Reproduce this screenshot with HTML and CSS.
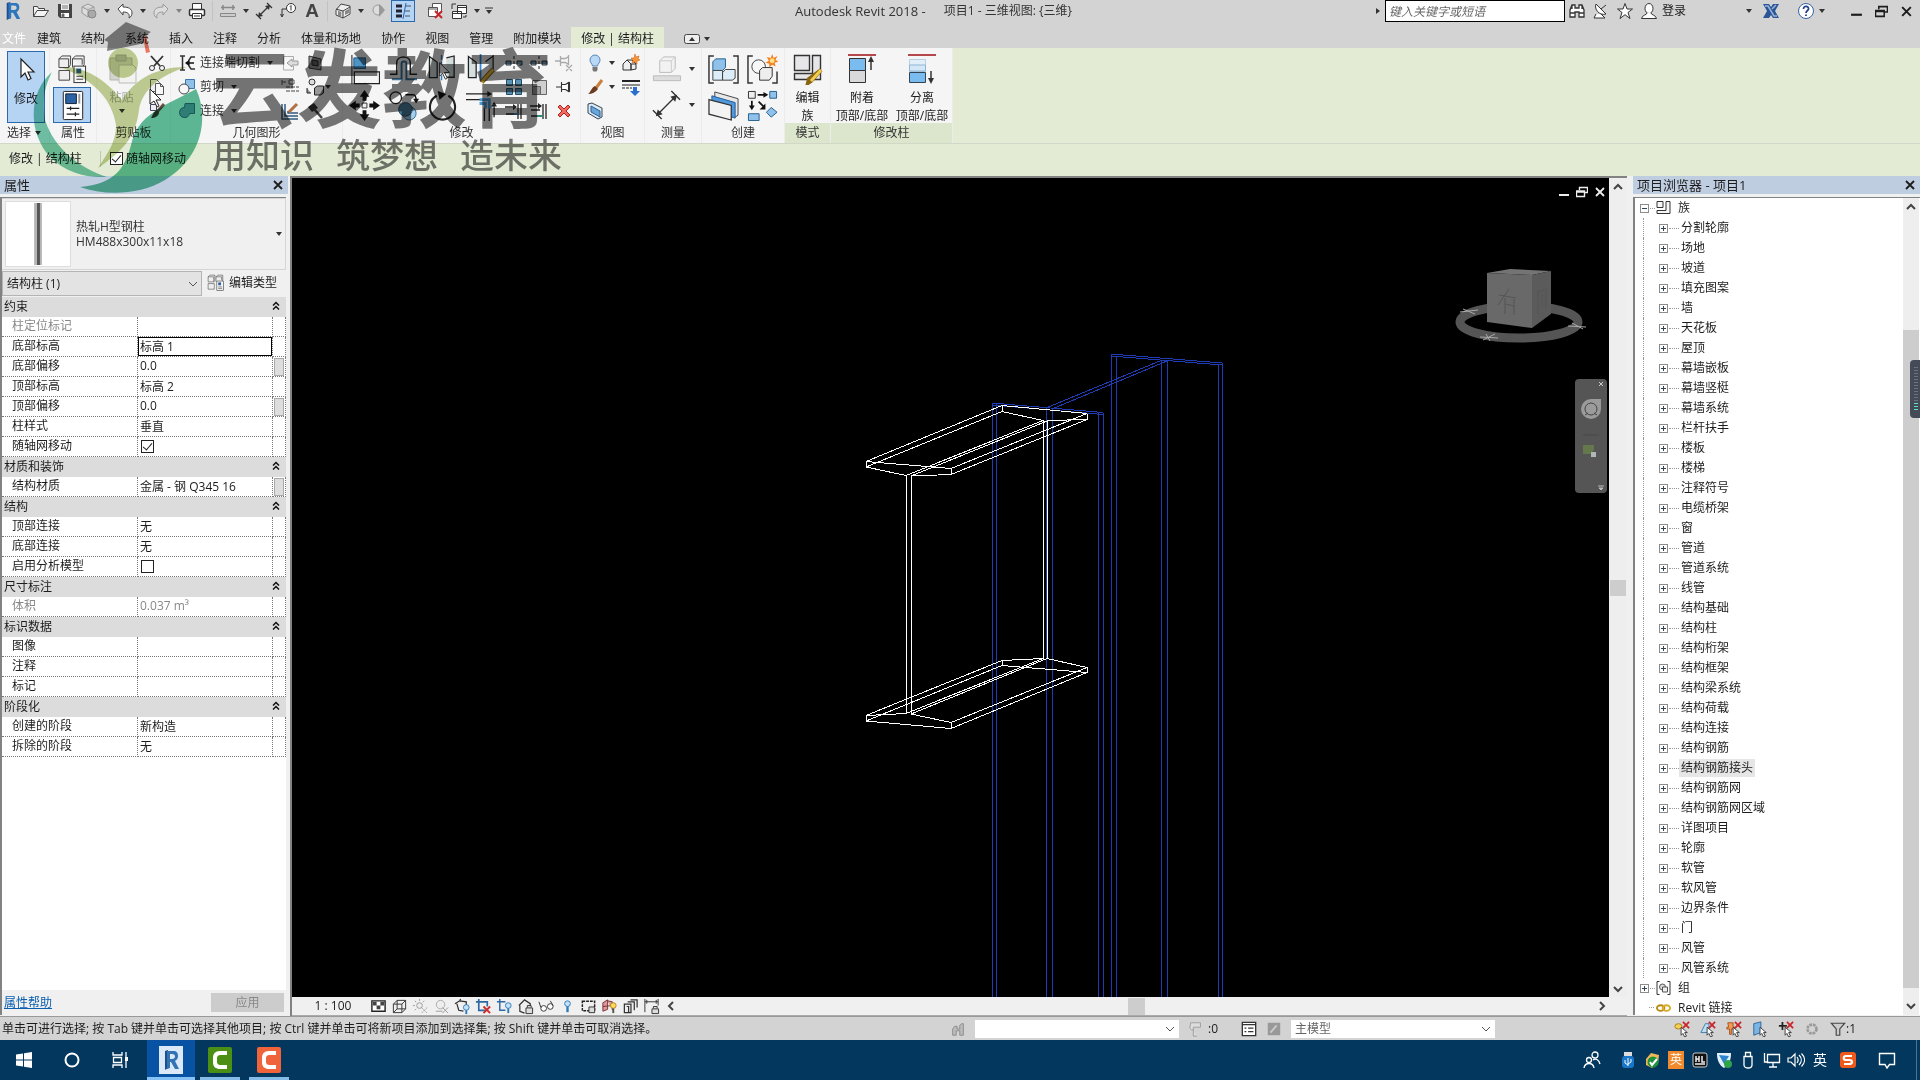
FILE: index.html
```html
<!DOCTYPE html>
<html lang="zh-CN">
<head>
    <meta charset="UTF-8">
    <meta name="viewport" content="width=device-width, initial-scale=1.0">
    <title>Autodesk Revit 2018</title>
    <link rel="stylesheet" href="styles.css">
</head>
<body>
    <svg class="sprite" aria-hidden="true">
        <!-- general -->
        <symbol id="caret" viewBox="0 0 8 8"><path d="M1 2h6L4 6z" fill="#333"/></symbol>
        <symbol id="chev-down" viewBox="0 0 10 10"><path d="M1 3l4 4 4-4" fill="none" stroke="#555"/></symbol>
        <symbol id="chev-bold" viewBox="0 0 10 10"><path d="M1 3l4 4 4-4" fill="none" stroke="#444" stroke-width="2"/></symbol>
        <symbol id="fold" viewBox="0 0 8 10"><path d="M1 4.500l3-3 3 3M1 8.500l3-3 3 3" fill="none" stroke="#111" stroke-width="1.500"/></symbol>
        <symbol id="close" viewBox="0 0 12 12"><path d="M2 2l8 8M10 2l-8 8" stroke="currentColor" stroke-width="1.800"/></symbol>
        <symbol id="minimize" viewBox="0 0 12 12"><path d="M1 9h10" stroke="currentColor" stroke-width="2"/></symbol>
        <symbol id="restore" viewBox="0 0 12 12"><path d="M3.500 4V1.500h8v5H9M.5 5h8v5.500h-8zM.5 6h8" fill="none" stroke="currentColor" stroke-width="1.400"/></symbol>
        <symbol id="redx" viewBox="0 0 18 18"><path d="M3 5l2-2 4 4 4-4 2 2-4 4 4 4-2 2-4-4-4 4-2-2 4-4z" fill="#f0685f" stroke="#b3221c"/></symbol>

        <!-- quick access -->
        <symbol id="logo" viewBox="0 0 18 20"><path d="M2 1l4-1v18l-4 2z" fill="#1f4f8b"/><path d="M4 1h7c4 0 5 2 5 5 0 2-1 4-3 5l4 8h-4l-4-7H7v6l-3 1zM7 4v5h3c2 0 3-1 3-2.500S12 4 10 4z" fill="#2f77bd" fill-rule="evenodd"/></symbol>
        <symbol id="open" viewBox="0 0 18 18"><path d="M1.500 14.500v-10h4l1 2h6v2M1.500 14.500l3.500-6h11.500l-4 6z" fill="#f3f3f3" stroke="#444"/></symbol>
        <symbol id="save" viewBox="0 0 18 18"><path d="M2 2h14v14H4l-2-2z" fill="#444"/><path d="M5 2h8v6H5z" fill="#eee"/><path d="M5 11h8v4H5z" fill="#fff"/><path d="M6 12h2v3H6zM6 4h6M6 6h6" fill="#444" stroke="#777"/></symbol>
        <symbol id="sync" viewBox="0 0 18 18"><path d="M2 5l6-3 6 3v6l-6 4-6-4zM2 5l6 3 6-3M8 8v7" fill="#ddd" stroke="#999"/><circle cx="12" cy="12" r="4" fill="#aaa" stroke="#888"/></symbol>
        <symbol id="undo" viewBox="0 0 18 18"><path d="M2 7l5-5v3c6 0 9 2 9 6 0 2-1 4-3 5 1-4-1-6-6-6v3z" fill="#fff" stroke="#444"/></symbol>
        <symbol id="redo" viewBox="0 0 18 18"><path d="M16 7l-5-5v3C5 5 2 7 2 11c0 2 1 4 3 5-1-4 1-6 6-6v3z" fill="#ddd" stroke="#999"/></symbol>
        <symbol id="print" viewBox="0 0 18 18"><path d="M4.500 7V1.500h9V7" fill="#fff" stroke="#333"/><rect x="1.500" y="7.500" width="15" height="6" rx="1" fill="#fff" stroke="#333" stroke-width="1.500"/><path d="M4.500 11.500h9v5h-9zM6 14h6" fill="#fff" stroke="#333"/></symbol>
        <symbol id="dim" viewBox="0 0 18 18"><path d="M2 5.500h14M4 3v5M14 3v5" stroke="#888" stroke-width="1.500"/><path d="M1.500 11.500h15v3h-15z" fill="#ccc" stroke="#888"/></symbol>
        <symbol id="measure" viewBox="0 0 18 18"><path d="M4 14L14 4M1 12l5 5M12 1l5 5" stroke="#333" stroke-width="1.300"/><path d="M3 15l1-5 4 4zM15 3l-5 1 4 4z" fill="#333"/></symbol>
        <symbol id="tag" viewBox="0 0 18 18"><circle cx="12" cy="6" r="4.500" fill="#fff" stroke="#333"/><path d="M12 3.500v5M11 4.500l1-1M7.500 7H3v7M1.500 12l1.500 3 1.500-3" fill="none" stroke="#333"/></symbol>
        <symbol id="house" viewBox="0 0 18 18"><path d="M2 8l5-6 9 2v8l-7 4-7-3zM9 16V9L2 7M9 9l7-4" fill="#eee" stroke="#444"/><path d="M4 9l3 1v5l-3-1zM11 9l4-2v4l-4 2z" fill="#888"/></symbol>
        <symbol id="section" viewBox="0 0 18 18"><circle cx="8" cy="8" r="5" fill="#ddd" stroke="#999"/><path d="M9 2l6 6-6 7z" fill="#999"/></symbol>
        <symbol id="thin" viewBox="0 0 18 18"><path d="M2 4h6M2 9h6M2 14h6" stroke="#223" stroke-width="3"/><path d="M12 1L9 17" stroke="#2a67b1"/><path d="M12 4h5M11 9h5M11 14h5" stroke="#456"/></symbol>
        <symbol id="closewin" viewBox="0 0 18 18"><path d="M6.500 6V1.500h9v9H13M2.500 5.500h9v9h-9zM2.500 7h9" fill="#fff" stroke="#555"/><path d="M9 9l7 7M16 9l-7 7" stroke="#c8242b" stroke-width="2"/></symbol>
        <symbol id="switchwin" viewBox="0 0 18 18"><path d="M7.500 3.500h9v8h-9zM7.500 5.500h9M2.500 9.500h9v7h-9zM2.500 11.500h9" fill="#fff" stroke="#333"/><path d="M2 7V2h4M13 15h3v-2" fill="none" stroke="#333"/></symbol>
        <symbol id="more" viewBox="0 0 8 8"><path d="M0 1h8" stroke="#333"/><path d="M1 3h6L4 7z" fill="#333"/></symbol>
        <symbol id="binoc" viewBox="0 0 18 18"><path d="M2 15V8l2-5h3v3h4V3h3l2 5v7h-5v-5H7v5zM2 11h5M11 11h5M4 3v4M14 3v4" fill="#fff" stroke="#333" stroke-width="1.300"/></symbol>
        <symbol id="dish" viewBox="0 0 18 18"><path d="M4 2c-2 5 3 12 10 10zM4 2l10 10M9 7l5-4M4 12l-2 4h11l-4-4" fill="#fff" stroke="#333"/></symbol>
        <symbol id="star" viewBox="0 0 18 18"><path d="M9 1.500l2 5.500h5.500L12 10.500l2 6-5-3.800-5 3.800 2-6L1.500 7H7z" fill="#fff" stroke="#333"/></symbol>
        <symbol id="person" viewBox="0 0 18 18"><ellipse cx="9" cy="6.500" rx="4" ry="5" fill="#fff" stroke="#333"/><path d="M7 11c0 2-5 2-5.500 5.500h15C16 13 11 13 11 11" fill="#fff" stroke="#333"/></symbol>
        <symbol id="exchange" viewBox="0 0 18 18"><path d="M1 2h6l2 3 2-3h6l-4 7 4 7h-6l-2-3-2 3H1l4-7z" fill="#2b5597"/><path d="M3 4h3l6 10h3M10 7l4-4" fill="none" stroke="#9ab4d8" stroke-width="1.500"/></symbol>
        <symbol id="help" viewBox="0 0 18 18"><circle cx="9" cy="9" r="7.500" fill="#fff" stroke="#3763a8"/><path d="M6.500 7c0-4 5.500-3 5 0-.3 1.500-2.500 2-2.500 4M9 12.500V14" fill="none" stroke="#24418c" stroke-width="1.800"/></symbol>
        <symbol id="collapse" viewBox="0 0 16 10"><rect x=".5" y=".5" width="15" height="9" rx="2" fill="#eee" stroke="#444"/><path d="M5 7l3-4 3 4z" fill="#333"/></symbol>

        <!-- ribbon -->
        <symbol id="arrow" viewBox="0 0 32 32"><path d="M11 5v18l4-4 3 7 3-1.500-3-6.500h6z" fill="#fff" stroke="#222" stroke-width="1.200"/></symbol>
        <symbol id="types" viewBox="0 0 32 32"><path d="M2 5l3-3h9v9l-2 3H2zM16 5l3-3h9v9l-2 3M16 5v9M2 17h11v10H2zM2 5h10v9M16 5h10v6" fill="#eee" stroke="#444"/><rect x="17.500" y="12.500" width="12" height="17" fill="#f7f7f7" stroke="#333"/><path d="M20 15h5v5h-5z" fill="#2d5d9c"/><path d="M20 23h7M20 26h7" stroke="#333"/></symbol>
        <symbol id="props" viewBox="0 0 32 32"><rect x="6.500" y="1.500" width="20" height="29" rx="1" fill="#fff" stroke="#222"/><path d="M9 4h11v10H9z" fill="#2b62a6" stroke="#123"/><path d="M23 4v10" stroke="#999" stroke-width="2"/><path d="M10 19h13M10 25h13M14 17v4M19 23v4" stroke="#222" stroke-width="1.300"/></symbol>
        <symbol id="paste" viewBox="0 0 32 32"><path d="M4 5h22v22H4z" fill="#d4d4cf" stroke="#b5b5b0"/><path d="M10 2h10v6H10z" fill="#c2c2bd" stroke="#aaa"/><path d="M13 12h14l3 3v15H13z" fill="#f2f2ef" stroke="#bbb"/></symbol>
        <symbol id="cut" viewBox="0 0 18 18"><path d="M3 2l9 10M15 2L6 12" stroke="#333" stroke-width="1.800"/><circle cx="4" cy="14" r="2.500" fill="none" stroke="#333"/><circle cx="14" cy="14" r="2.500" fill="none" stroke="#333"/></symbol>
        <symbol id="copy" viewBox="0 0 18 18"><path d="M2.500 1.500h6l3 3v9h-9z" fill="#eee" stroke="#666"/><path d="M7.500 5.500h5l3 3v8h-8zM12.500 5.500v3h3" fill="#f7f7f7" stroke="#555"/></symbol>
        <symbol id="brush" viewBox="0 0 18 18"><path d="M2.500 2.500h6v6h-6z" fill="#eee" stroke="#446"/><path d="M16 2l-7 8" stroke="#6b5344" stroke-width="3"/><path d="M9 8l2 2c0 4-4 6-8 6 2-3 2-6 6-8z" fill="#4a3a32"/></symbol>
        <symbol id="cope" viewBox="0 0 18 18"><path d="M2 2h5M2 16h5M4.500 2v14M17 3h-4l-2 3v6l2 3h4" fill="none" stroke="#333" stroke-width="1.500"/><path d="M16 9H9" stroke="#111" stroke-width="1.500"/><path d="M11 6L7 9l4 3z" fill="#111"/></symbol>
        <symbol id="geocut" viewBox="0 0 18 18"><path d="M7.500 1.500h9v9h-9z" fill="#8ec0e8" stroke="#3c78ad"/><circle cx="6" cy="11" r="5" fill="#f7f7f7" stroke="#444"/></symbol>
        <symbol id="geojoin" viewBox="0 0 18 18"><path d="M7 1.500h9.500v10h-5a5 5 0 1 1-5-6z" fill="#7ba9c4" stroke="#3f7391"/></symbol>
        <symbol id="unjoin" viewBox="0 0 18 18"><path d="M2.500 2.500h10v4M12.500 12v4h-10v-13" fill="#f7f7f7" stroke="#aaa"/><path d="M6 9l5-4v2h6v4h-6v2z" fill="#ddd" stroke="#999"/></symbol>
        <symbol id="beam" viewBox="0 0 18 18"><path d="M5 9h13M5 13h13" stroke="#444" stroke-dasharray="4 1"/><path d="M1 2v5M1 4h4M8 2h5v4H8z" fill="none" stroke="#555"/></symbol>
        <symbol id="wallopen" viewBox="0 0 18 18"><path d="M3 2l12 3v11L3 14z" fill="#999" stroke="#333"/><path d="M6 6l6 1v5l-6-1z" fill="#666" stroke="#222"/></symbol>
        <symbol id="splitface" viewBox="0 0 18 18"><circle cx="6" cy="4" r="3" fill="#ddd" stroke="#333"/><path d="M1 10v5h4M8.500 10l3-2h6v7l-3 2h-6z" fill="#999" stroke="#222"/></symbol>
        <symbol id="wallpen" viewBox="0 0 18 18"><path d="M1 2v15h16M4 2v12h13M7 9v2h10" fill="none" stroke="#31577e" stroke-width="1.500"/><path d="M16 2L8 10" stroke="#b07040" stroke-width="3"/></symbol>
        <symbol id="hammer" viewBox="0 0 18 18"><path d="M2 5l6-4 4 5-6 4z" fill="#333"/><path d="M8 7l8 9" stroke="#444" stroke-width="2.500"/></symbol>
        <symbol id="align" viewBox="0 0 32 32"><path d="M3 1v30" stroke="#111"/><path d="M5 4h12v11H5z" fill="#4c95c6" stroke="#1b5c8c"/><path d="M5.500 18.500h26v12h-26z" fill="none" stroke="#222" stroke-width="1.300"/></symbol>
        <symbol id="offset" viewBox="0 0 32 32"><path d="M2 21h7V9c0-8 14-8 14 0v12h7" fill="none" stroke="#222" stroke-width="1.500"/><path d="M4 26h10V10c0-3 5-3 5 0v16h11" fill="none" stroke="#3b6f95" stroke-width="2"/></symbol>
        <symbol id="mirror" viewBox="0 0 32 32"><path d="M2.500 2.500l8 6v16h-8zM20 4l8-2v22h-8" fill="#8aa" fill-opacity=".3" stroke="#222" stroke-width="1.300"/><path d="M15 1v28" stroke="#347ab6" stroke-width="1.500" stroke-dasharray="5 2"/><path d="M13 9v14l3-3 3 6 2-1-3-6h5z" fill="#fff" stroke="#333"/></symbol>
        <symbol id="mirrordraw" viewBox="0 0 32 32"><path d="M2.500 2.500l8 6v16h-8zM20 8l8-6v16" fill="#8aa" fill-opacity=".3" stroke="#222" stroke-width="1.300"/><path d="M15 0v28" stroke="#2f89d4" stroke-width="1.800"/><path d="M28 16L16 29" stroke="#826018" stroke-width="5"/><path d="M28 16L16 29" stroke="#e8b93e" stroke-width="3"/></symbol>
        <symbol id="move" viewBox="0 0 32 32"><path d="M16 0l5 7h-3v4h-4V7h-3zM16 32l5-7h-3v-4h-4v4h-3zM0 16l7-5v3h4v4H7v3zM32 16l-7-5v3h-4v4h4v3z" fill="#111"/><path d="M13.500 13.500h5v5h-5z" fill="#eee" stroke="#333"/></symbol>
        <symbol id="copyobj" viewBox="0 0 32 32"><circle cx="8" cy="8" r="6" fill="none" stroke="#222" stroke-width="1.400"/><path d="M18 5h8c2 0 3 3 3 6" fill="none" stroke="#111" stroke-width="1.500"/><path d="M26 9l3 5 3-5z" fill="#111"/><circle cx="22" cy="24" r="7" fill="#a6cfec" stroke="#2f6b98"/><circle cx="18" cy="20" r="7" fill="#4b81a4" stroke="#234a66"/></symbol>
        <symbol id="rotate" viewBox="0 0 32 32"><path d="M22 6a13 13 0 1 1-12 0" fill="none" stroke="#222" stroke-width="2.200"/><path d="M11 1l9 3-7 6z" fill="#111"/></symbol>
        <symbol id="trim" viewBox="0 0 32 32"><path d="M0 10h16M19 32V18M24 32V18M0 4h24M29 28V14" fill="none" stroke="#222" stroke-width="1.400"/><path d="M14 10h10v9M14 14h6v5" fill="none" stroke="#4b9bd4" stroke-width="3"/><path d="M22 1l5 3-5 3zM26 17l3-5 3 5z" fill="#222"/></symbol>
        <symbol id="split" viewBox="0 0 18 18"><path d="M1 7h5v4H1zM12 7h5v4h-5z" fill="#6ea0c4" stroke="#333"/><path d="M9 2v14" stroke="#222" stroke-dasharray="3 2"/></symbol>
        <symbol id="array" viewBox="0 0 18 18"><path d="M1.500 1.500h6v6h-6zM10.500 1.500h6v6h-6zM1.500 10.500h6v6h-6zM10.500 10.500h6v6h-6z" fill="#5c93b5" stroke="#234f6d"/></symbol>
        <symbol id="scale" viewBox="0 0 18 18"><path d="M2.500 2.500h14v14h-14z" fill="#777" fill-opacity=".3" stroke="#666"/><path d="M2.500 8.500h8v8h-8z" fill="#999" stroke="#666"/></symbol>
        <symbol id="extend" viewBox="0 0 18 18"><path d="M0 5h9M1 12h9M13 2v15M16 2v15" stroke="#222" stroke-width="1.300"/><path d="M8 2l4 3-4 3z" fill="#222"/><path d="M9 12h4" stroke="#358dcb" stroke-width="2"/></symbol>
        <symbol id="extendm" viewBox="0 0 18 18"><path d="M0 4h9M1 8h9M1 14h9M13 2v15M16 2v15" stroke="#222" stroke-width="1.300"/><path d="M8 1l4 3-4 3z" fill="#222"/><path d="M7 14h6" stroke="#2c8c74" stroke-width="2"/></symbol>
        <symbol id="pin" viewBox="0 0 18 18"><path d="M1 9h5M6.500 4v10M6.500 6.500h4l3-2v9l-3-2h-4M14.500 4v10" fill="#fff" stroke="#333" stroke-width="1.100"/></symbol>
        <symbol id="unpin" viewBox="0 0 18 18"><path d="M0 7h5M5.500 2v10M5.500 4.500h5l3-2v8l-3-2h-5M13.500 1v10M11 11l6 6M17 11l-6 6" fill="none" stroke="#aaa" stroke-width="1.300"/></symbol>
        <symbol id="bulb" viewBox="0 0 18 18"><path d="M9 1a5 5 0 0 1 5 5c0 3-2 3-2.500 6h-5C6 9 4 9 4 6a5 5 0 0 1 5-5z" fill="#b8d8f5" stroke="#5b86b8"/><path d="M6.500 13h5v3l-1 1.500h-3l-1-1.500z" fill="#777"/></symbol>
        <symbol id="houses" viewBox="0 0 18 18"><path d="M1 10l4-4 4 4v6H1zM9 10h5v5l-5 1zM5 6h5l4 4" fill="#eee" stroke="#333"/><path d="M13 0l1 3 3-1-1 3 2 1-3 1 0 3-2-2-3 1 1-3-2-2 3 0z" fill="#f79633" stroke="#cb5a12" stroke-width=".5"/></symbol>
        <symbol id="paint" viewBox="0 0 18 18"><path d="M16 2l-6 8" stroke="#c77f3e" stroke-width="3"/><path d="M9 8l3 3c-2 3-6 5-10 5 3-2 3-6 7-8z" fill="#6b3a20"/></symbol>
        <symbol id="lines" viewBox="0 0 18 18"><path d="M0 3h18" stroke="#222" stroke-width="2"/><path d="M0 7h18" stroke="#222"/><path d="M0 10h10" stroke="#222" stroke-dasharray="3 1"/><path d="M11 9h4v4h3l-5 5-5-5h3z" fill="#2a6fd0"/></symbol>
        <symbol id="hide" viewBox="0 0 18 18"><path d="M2 2l4-1 10 5v9l-4 2L2 11z" fill="#dbe9f4" stroke="#345"/><path d="M5 4l9 5v6l-9-5z" fill="#6ba6db" stroke="#2c5f95"/></symbol>
        <symbol id="meas3d" viewBox="0 0 32 32"><path d="M9 7l4-4h12v12l-4 4H9z" fill="#f2f2f2" stroke="#bbb"/><path d="M9 7h12v12M21 7l4-4" fill="none" stroke="#ccc"/><path d="M2.500 22.500h28v5h-28z" fill="#ddd" stroke="#bbb"/></symbol>
        <symbol id="dimline" viewBox="0 0 32 32"><path d="M6 26L26 6M2 21l9 9M21 1l9 9" stroke="#333" stroke-width="1.400"/><path d="M5 27l2-7 5 5zM27 5l-7 2 5 5z" fill="#333"/></symbol>
        <symbol id="group" viewBox="0 0 32 32"><path d="M6 2H1v28h5M26 2h5v28h-5" fill="none" stroke="#333" stroke-width="1.500"/><path d="M5 8l3-3h10v9l-3 3H5z" fill="#8fc1ea" stroke="#25618f"/><path d="M5 17h10v10H5zM15 19l3-3h10v9l-3 2H15z" fill="#dcecf8" stroke="#444"/></symbol>
        <symbol id="similar" viewBox="0 0 32 32"><path d="M6 2H1v28h5M26 30h5V18" fill="none" stroke="#333" stroke-width="1.500"/><circle cx="12" cy="13" r="7" fill="#f7f7f7" stroke="#444"/><path d="M13 17l3-3h10v9l-3 4H13z" fill="#eee" stroke="#333"/><path d="M26 0l1.500 4 4-2-2 4 3 2-4 1 1 4-3.500-2-3 3v-4l-4-1 3.500-2-2-4 4 1z" fill="#f58220"/><circle cx="26" cy="7" r="2.500" fill="#ffe08a"/></symbol>
        <symbol id="asm" viewBox="0 0 32 32"><path d="M7 2l24 7v17l-3 2L7 20z" fill="#e8e8e8" stroke="#444"/><path d="M4 6l24 7v16L4 22z" fill="#4f9ade" stroke="#235a94"/><path d="M1 10l23 6v15L1 25z" fill="#f3f3f3" stroke="#333" stroke-width="1.300"/></symbol>
        <symbol id="parts" viewBox="0 0 32 32"><path d="M1.500 1.500h7v7h-7z" fill="#eee" stroke="#333"/><path d="M23.500 1.500h7v7h-7zM1.500 24.500h11v7h-11zM25 18l6 5-6 5-5-5z" fill="#8fc1ea" stroke="#25618f"/><path d="M11 5h7M5 11v6M12 12l5 5" stroke="#111" stroke-width="1.800"/><path d="M17 2l5 3-5 3zM2 16l3 5 3-5zM19 14v6h-6z" fill="#111"/></symbol>
        <symbol id="editfam" viewBox="0 0 32 32"><path d="M2.500 2.500h15v15h-15zM20.500 2.500h8v24h-26v-6h18z" fill="#e6e6e8" stroke="#333" stroke-width="1.400"/><path d="M29 17L19 28l-3 2 1-4z" stroke="#8a6512" stroke-width="4" fill="#8a6512"/><path d="M29 17L19 28" stroke="#f2cd4e" stroke-width="3"/></symbol>
        <symbol id="attach" viewBox="0 0 32 32"><path d="M2 2h28" stroke="#b5484a" stroke-width="2"/><path d="M3.500 5.500h16v12h-16z" fill="#7bbcf0" stroke="#333"/><path d="M3.500 17.500h16v12h-16z" fill="#d9d9dc" stroke="#333"/><path d="M25 17V6" stroke="#333" stroke-width="1.500"/><path d="M22 9l3-6 3 6z" fill="#333"/></symbol>
        <symbol id="detach" viewBox="0 0 32 32"><path d="M2 2h28" stroke="#b5484a" stroke-width="2"/><path d="M3.500 6.500h16v12h-16z" fill="#e2eff9" stroke="#b5cfe3"/><path d="M3.500 12h16v6h-16z" fill="#d3e7f7" stroke="#8fb5d3"/><path d="M3.500 19.500h16v10h-16z" fill="#7bbcf0" stroke="#345"/><path d="M25 18v9" stroke="#333" stroke-width="1.500"/><path d="M22 25l3 6 3-6z" fill="#333"/></symbol>

        <!-- view bar -->
        <symbol id="v-detail" viewBox="0 0 18 18"><path d="M2 3h14v11H2z" fill="#fff" stroke="#222" stroke-width="1.500"/><path d="M3 4h4v4H3zM11 4h4v4h-4zM7 8h4v4H7z" fill="#444"/></symbol>
        <symbol id="v-style" viewBox="0 0 18 18"><path d="M2.500 6.500h9v9h-9zM2.500 6.500l4-4h9l-4 4M15.500 2.500v9l-4 4M6.500 2.500v9h9M6.500 11.500l-4 4" fill="none" stroke="#333"/></symbol>
        <symbol id="v-sun" viewBox="0 0 18 18"><circle cx="8" cy="8" r="3" fill="#eee" stroke="#999"/><path d="M8 1v3M1 8h3M3 3l2 2M13 3l-2 2M3 13l2-2M10 10l6 6M16 10l-6 6" stroke="#999" stroke-dasharray="2 1"/></symbol>
        <symbol id="v-shadow" viewBox="0 0 18 18"><circle cx="8" cy="7" r="4.500" fill="#eee" stroke="#aaa"/><path d="M3 14h7M10 10l6 6M16 10l-6 6" stroke="#999"/></symbol>
        <symbol id="v-render" viewBox="0 0 18 18"><path d="M1 6l5-3 7 1v5M3 6l2 7 5 1M6 3l1-2" fill="none" stroke="#333" stroke-width="1.300"/><circle cx="13" cy="10" r="3" fill="#c4e3fb" stroke="#2d7ab8"/><path d="M13 13v4" stroke="#2d7ab8" stroke-width="2"/></symbol>
        <symbol id="v-crop" viewBox="0 0 18 18"><path d="M4 1v12h7M1 4h12v5" fill="none" stroke="#2d69a4" stroke-width="1.800"/><path d="M9 9l7 7M16 9l-7 7" stroke="#cf2b2b" stroke-width="2"/></symbol>
        <symbol id="v-cropvis" viewBox="0 0 18 18"><path d="M4 1v12h6M1 4h9" fill="none" stroke="#2d69a4" stroke-width="1.500"/><circle cx="13" cy="8" r="3" fill="#c4e3fb" stroke="#2d7ab8"/><path d="M13 11v5" stroke="#2d7ab8" stroke-width="2"/></symbol>
        <symbol id="v-lock" viewBox="0 0 18 18"><path d="M2 8l6-6 6 4v3M3 8v6l5 2" fill="none" stroke="#333" stroke-width="1.300"/><path d="M9.500 10.500h7v6h-7zM11 10V8h4v2" fill="#ddd" stroke="#333"/></symbol>
        <symbol id="v-glasses" viewBox="0 0 18 18"><ellipse cx="6" cy="11" rx="3" ry="3" fill="#fff" stroke="#333"/><ellipse cx="13" cy="9" rx="3" ry="3" fill="#fff" stroke="#333"/><path d="M3 10L1 4M16 8l-3-5" stroke="#333"/></symbol>
        <symbol id="v-bulb" viewBox="0 0 18 18"><circle cx="9" cy="6" r="3" fill="#c4e3fb" stroke="#2d7ab8"/><path d="M9 9v6" stroke="#2d7ab8" stroke-width="2.500"/></symbol>
        <symbol id="v-temp" viewBox="0 0 18 18"><path d="M2.500 3.500h13v10h-13z" fill="#eee" stroke="#222" stroke-width="1.500" stroke-dasharray="3 1"/><path d="M9.500 9.500h6v6h-6z" fill="#ddd" stroke="#333"/></symbol>
        <symbol id="v-analysis" viewBox="0 0 18 18"><path d="M2 14V5l5-3v10zM7 3l5 1v9M2 9l10-1" fill="#d99" stroke="#733"/><circle cx="13" cy="8" r="3" fill="#ffd964" stroke="#b8860b"/><path d="M13 11v5" stroke="#555" stroke-width="2"/></symbol>
        <symbol id="v-disp" viewBox="0 0 18 18"><path d="M2.500 6.500h7v9h-7zM6 4h7v9M9 2h7v8M5 9h2v6" fill="#eee" stroke="#333" stroke-width="1.300"/></symbol>
        <symbol id="v-constr" viewBox="0 0 18 18"><path d="M2 1v14M16 1v7M2 4h14M4 2v4M14 2v4" stroke="#333"/><path d="M9.500 11.500h7v5h-7zM11 11V9h4v2" fill="#ddd" stroke="#333"/></symbol>

        <!-- status bar -->
        <symbol id="s-link" viewBox="0 0 18 18"><ellipse cx="5" cy="6" rx="4" ry="3" fill="#f3cf53" stroke="#a67a10"/><path d="M10 1l7 7M17 1l-7 7" stroke="#c8262b" stroke-width="2"/><path d="M8 7v9l2-2 2 4 2-1-2-4h3z" fill="#fff" stroke="#333"/></symbol>
        <symbol id="s-under" viewBox="0 0 18 18"><path d="M1 13L6 3h4v10z" fill="#bcdcf2" stroke="#3a79ab"/><path d="M10 1l7 7M17 1l-7 7" stroke="#c8262b" stroke-width="2"/><path d="M8 7v9l2-2 2 4 2-1-2-4h3z" fill="#fff" stroke="#333"/></symbol>
        <symbol id="s-pin" viewBox="0 0 18 18"><path d="M2 2h6v5h2v2H6v6H4V9H1V7h2z" fill="#f39a55" stroke="#a54c10"/><path d="M10 1l7 7M17 1l-7 7" stroke="#c8262b" stroke-width="2"/><path d="M8 7v9l2-2 2 4 2-1-2-4h3z" fill="#fff" stroke="#333"/></symbol>
        <symbol id="s-face" viewBox="0 0 18 18"><path d="M2 3l8-2v12l-8 3z" fill="#7bb5e6" stroke="#285f96"/><path d="M9 7v9l2-2 2 4 2-1-2-4h3z" fill="#fff" stroke="#333"/></symbol>
        <symbol id="s-drag" viewBox="0 0 18 18"><path d="M5 1v9M1 5.500h9" stroke="#222" stroke-width="2"/><path d="M10 1l7 7M17 1l-7 7" stroke="#c8262b" stroke-width="2"/><path d="M8 7v9l2-2 2 4 2-1-2-4h3z" fill="#fff" stroke="#333"/></symbol>
        <symbol id="s-gear" viewBox="0 0 18 18"><circle cx="9" cy="9" r="5" fill="none" stroke="#999" stroke-width="3" stroke-dasharray="3 1"/></symbol>
        <symbol id="s-filter" viewBox="0 0 18 18"><path d="M1.500 2.500h15L11 9v7H7V9z" fill="#ccc" stroke="#444" stroke-width="1.300"/></symbol>
        <symbol id="s-people" viewBox="0 0 18 18"><path d="M3 16V9l2-3h3v3h3V5l2-2h2v13h-4v-5H7v5z" fill="#bbb" stroke="#888"/></symbol>
        <symbol id="s-edit" viewBox="0 0 18 18"><path d="M3 2h11v5H6v3H4l-2-2zM6 10v7h4" fill="#ddd" stroke="#999"/></symbol>
        <symbol id="s-opt" viewBox="0 0 18 18"><path d="M1.500 1.500h15v15h-15zM1.500 4h15" fill="#fff" stroke="#333" stroke-width="1.500"/><path d="M4 8h2M4 12h2M8 8h6M8 12h6" stroke="#333" stroke-width="1.500"/></symbol>
        <symbol id="s-opt2" viewBox="0 0 18 18"><path d="M2 2h14v14H2z" fill="#999"/><path d="M5 13l7-8" stroke="#ccc" stroke-width="2"/></symbol>

        <!-- tree -->
        <symbol id="t-fam" viewBox="0 0 14 14"><path d="M.5.500h6v6h-6zM9.500.500h4v12h-13v-3h9z" fill="#f7f7f7" stroke="#333"/></symbol>
        <symbol id="t-grp" viewBox="0 0 14 14"><path d="M3 .5H.5v13H3M11 .5h2.500v13H11" fill="none" stroke="#333"/><circle cx="6" cy="6" r="3" fill="#ddd" stroke="#555"/><path d="M6 6h5v5H6z" fill="#eee" stroke="#555"/></symbol>
        <symbol id="t-link" viewBox="0 0 16 14"><ellipse cx="5" cy="7" rx="4" ry="3" fill="none" stroke="#b98a12" stroke-width="2"/><ellipse cx="11" cy="7" rx="4" ry="3" fill="none" stroke="#d8ab26" stroke-width="2"/></symbol>

        <!-- taskbar -->
        <symbol id="w-start" viewBox="0 0 18 18"><path d="M1 3.500l7-1V8.500H1zM9 2.300L17 1v7.500H9zM1 9.500h7v6l-7-1zM9 9.500h8V17l-8-1.200z" fill="#fff"/></symbol>
        <symbol id="w-cortana" viewBox="0 0 18 18"><circle cx="9" cy="9" r="6.500" fill="none" stroke="#fff" stroke-width="2"/></symbol>
        <symbol id="w-task" viewBox="0 0 18 18"><path d="M2 1v3h9V1M2.500 6.500h8v5h-8zM2 17v-3h9v3M15 1v16" fill="none" stroke="#fff" stroke-width="1.300"/><path d="M14 6h3v4h-3z" fill="#fff"/></symbol>
        <symbol id="w-revit" viewBox="0 0 24 28"><path d="M0 0h24v28H0z" fill="#dbe8f7"/><path d="M6 5l3-1v18l-3 2z" fill="#1f4f8b"/><path d="M8 5h6c4 0 5 2 5 5 0 2-1 4-3 5l4 8h-4l-4-7h-1v6l-3 1zM11 8v5h2c2 0 3-1 3-2.500S15 8 13 8z" fill="#3273b3" fill-rule="evenodd"/></symbol>
        <symbol id="w-cam" viewBox="0 0 24 28"><rect y="1" width="24" height="26" rx="2" fill="currentColor"/><path d="M19 9V5h-7c-5 0-7 3-7 7v4c0 5 3 7 7 7h7v-4h-6c-3 0-4-1-4-4v-2c0-3 1-4 4-4z" fill="#fff"/></symbol>
        <symbol id="w-people" viewBox="0 0 18 18"><circle cx="12" cy="4" r="3" fill="none" stroke="#fff" stroke-width="1.300"/><circle cx="6" cy="9" r="2.500" fill="none" stroke="#fff" stroke-width="1.300"/><path d="M1 17c1-6 9-6 10 0M10 9c3-2 6 0 7 4" fill="none" stroke="#fff" stroke-width="1.300"/></symbol>
        <symbol id="w-usb" viewBox="0 0 18 18"><path d="M5 1h8v4H5z" fill="#ddd"/><rect x="3" y="5" width="12" height="12" rx="3" fill="#1877c9"/><path d="M9 7v8M6 9v3l3 2M12 8v3l-3 2" fill="none" stroke="#fff"/></symbol>
        <symbol id="w-leaf" viewBox="0 0 18 18"><path d="M3 8l5-6 8 2-1 9-6 4-6-3z" fill="#eeb857"/><circle cx="10" cy="11" r="5.500" fill="#20913c"/><path d="M7 11l2 3 5-6" fill="none" stroke="#fff" stroke-width="2"/></symbol>
        <symbol id="w-monitor" viewBox="0 0 18 18"><rect x="2" y="2" width="14" height="14" rx="2" fill="#111" stroke="#ccc"/><path d="M5 5v6M8 5v6M5 8h3M11 5v6h3M4 13h10" stroke="#eee" stroke-width="1.500" fill="none"/></symbol>
        <symbol id="w-shield" viewBox="0 0 18 18"><path d="M2 2h14c0 7-2 12-7 15C4 14 2 9 2 2z" fill="#e4f1fb"/><path d="M4 4l10 1-5 8z" fill="#2b84cc"/><circle cx="13" cy="13" r="4" fill="#2fa24c"/></symbol>
        <symbol id="w-eject" viewBox="0 0 18 18"><path d="M6.500 5V1.500h5V5M5 5.500h8V14c0 2-2 3-4 3s-4-1-4-3z" fill="none" stroke="#fff" stroke-width="1.300"/></symbol>
        <symbol id="w-net" viewBox="0 0 18 18"><path d="M4.500 3.500h12v8h-12zM10 12v4M6 16h8M1.500 2v9h3" fill="none" stroke="#fff" stroke-width="1.300"/></symbol>
        <symbol id="w-sound" viewBox="0 0 18 18"><path d="M1 7h3l4-4v12l-4-4H1zM10 6c1.500 2 1.500 4 0 6M12 4c3 3 3 7 0 10M14.500 2.500c4 4 4 9 0 13" fill="none" stroke="#fff" stroke-width="1.200"/></symbol>
        <symbol id="w-sogou" viewBox="0 0 18 18"><rect x="1" y="1" width="16" height="16" rx="3" fill="#ee5a1c"/><path d="M13 5H7c-3 0-3 4 0 4h3c4 0 4 4 0 4H5" fill="none" stroke="#fff" stroke-width="2.200"/></symbol>
        <symbol id="w-note" viewBox="0 0 18 18"><path d="M1.500 2.500h15v11h-5L9 17l-2-3.500H1.500z" fill="none" stroke="#fff" stroke-width="1.400"/></symbol>
    </svg>

    <header class="titlebar">
        <nav class="quick" aria-label="快速访问">
            <button class="q logo" aria-label="Revit"><svg><use href="#logo"/></svg></button>
            <button class="q" aria-label="打开"><svg><use href="#open"/></svg></button>
            <button class="q" aria-label="保存"><svg><use href="#save"/></svg></button>
            <button class="q" aria-label="同步"><svg><use href="#sync"/></svg></button>
            <svg class="caret"><use href="#caret"/></svg>
            <button class="q" aria-label="放弃"><svg><use href="#undo"/></svg></button>
            <svg class="caret"><use href="#caret"/></svg>
            <button class="q" aria-label="重做"><svg><use href="#redo"/></svg></button>
            <svg class="caret dim"><use href="#caret"/></svg>
            <button class="q" aria-label="打印"><svg><use href="#print"/></svg></button>
            <span class="q-sep"></span>
            <button class="q" aria-label="测量"><svg><use href="#dim"/></svg></button>
            <svg class="caret"><use href="#caret"/></svg>
            <button class="q" aria-label="对齐尺寸标注"><svg><use href="#measure"/></svg></button>
            <button class="q" aria-label="按类别标记"><svg><use href="#tag"/></svg></button>
            <button class="q letter" aria-label="文字">A</button>
            <span class="q-sep"></span>
            <button class="q" aria-label="默认三维视图"><svg><use href="#house"/></svg></button>
            <svg class="caret"><use href="#caret"/></svg>
            <button class="q" aria-label="剖面"><svg><use href="#section"/></svg></button>
            <button class="q on" aria-label="细线"><svg><use href="#thin"/></svg></button>
            <span class="q-gap"></span>
            <button class="q" aria-label="关闭隐藏窗口"><svg><use href="#closewin"/></svg></button>
            <button class="q" aria-label="切换窗口"><svg><use href="#switchwin"/></svg></button>
            <svg class="caret"><use href="#caret"/></svg>
            <svg class="caret"><use href="#more"/></svg>
        </nav>
        <h1 class="title"><span>Autodesk Revit 2018 -</span><span>项目1 - 三维视图: {三维}</span></h1>
        <div class="info">
            <svg class="caret side"><use href="#caret"/></svg>
            <input class="search" type="text" aria-label="搜索" placeholder="键入关键字或短语">
            <button class="q" aria-label="搜索"><svg><use href="#binoc"/></svg></button>
            <button class="q" aria-label="通讯中心"><svg><use href="#dish"/></svg></button>
            <button class="q" aria-label="收藏夹"><svg><use href="#star"/></svg></button>
            <button class="login"><svg><use href="#person"/></svg>登录</button>
            <svg class="caret"><use href="#caret"/></svg>
            <button class="q exchange" aria-label="Exchange"><svg><use href="#exchange"/></svg></button>
            <button class="q help" aria-label="帮助"><svg><use href="#help"/></svg></button>
            <svg class="caret"><use href="#caret"/></svg>
            <div class="win">
                <button aria-label="最小化"><svg><use href="#minimize"/></svg></button>
                <button aria-label="还原"><svg><use href="#restore"/></svg></button>
                <button aria-label="关闭"><svg><use href="#close"/></svg></button>
            </div>
        </div>
    </header>

    <nav class="tabs">
        <a class="file" href="#">文件</a>
        <a href="#">建筑</a>
        <a href="#">结构</a>
        <a href="#">系统</a>
        <a href="#">插入</a>
        <a href="#">注释</a>
        <a href="#">分析</a>
        <a href="#">体量和场地</a>
        <a href="#">协作</a>
        <a href="#">视图</a>
        <a href="#">管理</a>
        <a href="#">附加模块</a>
        <a class="active" href="#">修改 | 结构柱</a>
        <button class="collapse" aria-label="最小化功能区"><svg class="cap"><use href="#collapse"/></svg><svg class="caret"><use href="#caret"/></svg></button>
    </nav>

    <div class="ribbon">
        <section class="panel p-select">
            <div class="tools"><button class="big on"><svg><use href="#arrow"/></svg>修改</button></div>
            <h2>选择 <svg class="caret"><use href="#caret"/></svg></h2>
        </section>
        <section class="panel p-props">
            <div class="tools two-rows">
                <button aria-label="类型属性"><svg><use href="#types"/></svg></button>
                <button class="on" aria-label="属性"><svg><use href="#props"/></svg></button>
            </div>
            <h2>属性</h2>
        </section>
        <section class="panel p-clip">
            <div class="tools">
                <button class="big off"><svg><use href="#paste"/></svg>粘贴<svg class="caret"><use href="#caret"/></svg></button>
                <div class="col">
                    <button aria-label="剪切到剪贴板"><svg><use href="#cut"/></svg></button>
                    <button aria-label="复制到剪贴板"><svg><use href="#copy"/></svg></button>
                    <button aria-label="匹配类型"><svg><use href="#brush"/></svg></button>
                </div>
            </div>
            <h2>剪贴板</h2>
        </section>
        <section class="panel p-geo">
            <div class="tools">
                <div class="col wide">
                    <button><svg><use href="#cope"/></svg>连接端切割<svg class="caret"><use href="#caret"/></svg></button>
                    <button><svg><use href="#geocut"/></svg>剪切<svg class="caret"><use href="#caret"/></svg></button>
                    <button><svg><use href="#geojoin"/></svg>连接<svg class="caret"><use href="#caret"/></svg></button>
                </div>
                <div class="col">
                    <button aria-label="取消连接"><svg><use href="#unjoin"/></svg></button>
                    <button aria-label="梁柱连接"><svg><use href="#beam"/></svg></button>
                    <button aria-label="墙连接"><svg><use href="#wallpen"/></svg></button>
                </div>
                <div class="col">
                    <button aria-label="洞口"><svg><use href="#wallopen"/></svg></button>
                    <button aria-label="填色"><svg><use href="#splitface"/></svg><svg class="caret"><use href="#caret"/></svg></button>
                    <button aria-label="拆除"><svg><use href="#hammer"/></svg></button>
                </div>
            </div>
            <h2>几何图形</h2>
        </section>
        <section class="panel p-modify">
            <div class="tools">
                <div class="grid4">
                    <button aria-label="对齐"><svg><use href="#align"/></svg></button>
                    <button aria-label="偏移"><svg><use href="#offset"/></svg></button>
                    <button aria-label="镜像 - 拾取轴"><svg><use href="#mirror"/></svg></button>
                    <button aria-label="镜像 - 绘制轴"><svg><use href="#mirrordraw"/></svg></button>
                    <button aria-label="移动"><svg><use href="#move"/></svg></button>
                    <button aria-label="复制"><svg><use href="#copyobj"/></svg></button>
                    <button aria-label="旋转"><svg><use href="#rotate"/></svg></button>
                    <button aria-label="修剪/延伸为角"><svg><use href="#trim"/></svg></button>
                </div>
                <div class="col">
                    <button aria-label="拆分图元"><svg><use href="#split"/></svg></button>
                    <button aria-label="阵列"><svg><use href="#array"/></svg></button>
                    <button aria-label="修剪/延伸单个图元"><svg><use href="#extend"/></svg></button>
                </div>
                <div class="col">
                    <button aria-label="用间隙拆分"><svg><use href="#split"/></svg></button>
                    <button aria-label="缩放"><svg><use href="#scale"/></svg></button>
                    <button aria-label="修剪/延伸多个图元"><svg><use href="#extendm"/></svg></button>
                </div>
                <div class="col">
                    <button aria-label="解锁"><svg><use href="#unpin"/></svg></button>
                    <button aria-label="锁定"><svg><use href="#pin"/></svg></button>
                    <button aria-label="删除"><svg><use href="#redx"/></svg></button>
                </div>
            </div>
            <h2>修改</h2>
        </section>
        <section class="panel p-view">
            <div class="tools">
                <div class="col pair">
                    <button aria-label="隐藏"><svg><use href="#bulb"/></svg><svg class="caret"><use href="#caret"/></svg></button>
                    <button aria-label="替换"><svg><use href="#paint"/></svg><svg class="caret"><use href="#caret"/></svg></button>
                    <button aria-label="选择框"><svg><use href="#hide"/></svg></button>
                </div>
                <div class="col">
                    <button aria-label="置换"><svg><use href="#houses"/></svg></button>
                    <button aria-label="线处理"><svg><use href="#lines"/></svg></button>
                </div>
            </div>
            <h2>视图</h2>
        </section>
        <section class="panel p-measure">
            <div class="tools two-rows">
                <button aria-label="测量"><svg><use href="#meas3d"/></svg><svg class="caret"><use href="#caret"/></svg></button>
                <button aria-label="尺寸标注"><svg><use href="#dimline"/></svg><svg class="caret"><use href="#caret"/></svg></button>
            </div>
            <h2>测量</h2>
        </section>
        <section class="panel p-create">
            <div class="tools">
                <div class="grid2">
                    <button aria-label="创建组"><svg><use href="#group"/></svg></button>
                    <button aria-label="创建类似实例"><svg><use href="#similar"/></svg></button>
                    <button aria-label="创建部件"><svg><use href="#asm"/></svg></button>
                    <button aria-label="创建零件"><svg><use href="#parts"/></svg></button>
                </div>
            </div>
            <h2>创建</h2>
        </section>
        <section class="panel context p-mode">
            <div class="tools"><button class="big"><svg><use href="#editfam"/></svg>编辑<br>族</button></div>
            <h2>模式</h2>
        </section>
        <section class="panel context p-column">
            <div class="tools">
                <button class="big"><svg><use href="#attach"/></svg>附着<br>顶部/底部</button>
                <button class="big"><svg><use href="#detach"/></svg>分离<br>顶部/底部</button>
            </div>
            <h2>修改柱</h2>
        </section>
    </div>

    <div class="options">
        <span class="mode">修改 | 结构柱</span>
        <label><input type="checkbox" checked>随轴网移动</label>
    </div>

    <main class="work">
        <aside class="dock">
            <div class="dock-title"><h2>属性</h2><button aria-label="关闭属性"><svg><use href="#close"/></svg></button></div>
            <div class="dock-body">
                <button class="type">
                    <svg class="thumb" viewBox="0 0 66 66"><path d="M29 1h8v64h-8z" fill="#b5b5b5"/><path d="M32 1h3v64h-3z" fill="#555"/></svg>
                    <span>热轧H型钢柱<br>HM488x300x11x18</span>
                    <svg class="caret"><use href="#caret"/></svg>
                </button>
                <div class="filter">
                    <div class="select">
                        <select aria-label="类别"><option>结构柱 (1)</option></select>
                        <svg><use href="#chev-down"/></svg>
                    </div>
                    <button class="edit-type"><svg><use href="#types"/></svg>编辑类型</button>
                </div>
                <div class="sheet">
                    <table class="props">
                        <colgroup><col class="c-name"><col><col class="c-btn"></colgroup>
                        <tbody>
                            <tr class="group"><th colspan="3">约束<svg><use href="#fold"/></svg></th></tr>
                            <tr class="ro"><td><label for="f1">柱定位标记</label></td><td><input id="f1" type="text" disabled></td><td></td></tr>
                            <tr class="cur"><td><label for="f2">底部标高</label></td><td><input id="f2" type="text" value="标高 1"></td><td></td></tr>
                            <tr><td><label for="f3">底部偏移</label></td><td><input id="f3" type="text" value="0.0"></td><td><button aria-label="关联底部偏移"></button></td></tr>
                            <tr><td><label for="f4">顶部标高</label></td><td><input id="f4" type="text" value="标高 2"></td><td></td></tr>
                            <tr><td><label for="f5">顶部偏移</label></td><td><input id="f5" type="text" value="0.0"></td><td><button aria-label="关联顶部偏移"></button></td></tr>
                            <tr><td><label for="f6">柱样式</label></td><td><input id="f6" type="text" value="垂直"></td><td></td></tr>
                            <tr><td><label for="f7">随轴网移动</label></td><td><input id="f7" type="checkbox" checked></td><td></td></tr>
                            <tr class="group"><th colspan="3">材质和装饰<svg><use href="#fold"/></svg></th></tr>
                            <tr><td><label for="f8">结构材质</label></td><td><input id="f8" type="text" value="金属 - 钢 Q345 16"></td><td><button aria-label="关联结构材质"></button></td></tr>
                            <tr class="group"><th colspan="3">结构<svg><use href="#fold"/></svg></th></tr>
                            <tr><td><label for="f9">顶部连接</label></td><td><input id="f9" type="text" value="无"></td><td></td></tr>
                            <tr><td><label for="f10">底部连接</label></td><td><input id="f10" type="text" value="无"></td><td></td></tr>
                            <tr><td><label for="f11">启用分析模型</label></td><td><input id="f11" type="checkbox"></td><td></td></tr>
                            <tr class="group"><th colspan="3">尺寸标注<svg><use href="#fold"/></svg></th></tr>
                            <tr class="ro"><td><label for="f12">体积</label></td><td><input id="f12" type="text" value="0.037 m³" disabled></td><td></td></tr>
                            <tr class="group"><th colspan="3">标识数据<svg><use href="#fold"/></svg></th></tr>
                            <tr><td><label for="f13">图像</label></td><td><input id="f13" type="text"></td><td></td></tr>
                            <tr><td><label for="f14">注释</label></td><td><input id="f14" type="text"></td><td></td></tr>
                            <tr><td><label for="f15">标记</label></td><td><input id="f15" type="text"></td><td></td></tr>
                            <tr class="group"><th colspan="3">阶段化<svg><use href="#fold"/></svg></th></tr>
                            <tr><td><label for="f16">创建的阶段</label></td><td><input id="f16" type="text" value="新构造"></td><td></td></tr>
                            <tr><td><label for="f17">拆除的阶段</label></td><td><input id="f17" type="text" value="无"></td><td></td></tr>
                        </tbody>
                    </table>
                </div>
                <div class="dock-foot">
                    <a href="#">属性帮助</a>
                    <button disabled>应用</button>
                </div>
            </div>
        </aside>

        <section class="view">
            <div class="canvas">
                <svg class="model" viewBox="292 178 1318 819" preserveAspectRatio="xMidYMid slice">
                    <g class="blue">
                        <path d="M992.500 403V998M996.500 404V998M1046.500 408V998M1052.500 409V998M1098.500 413V998M1103.500 413V998"/>
                        <path d="M1111.500 354V998M1116.500 356V998M1161.500 361V998M1167.500 361V998M1218.500 364V998M1222.500 363V998"/>
                        <path d="M992.500 403L1103.500 412.500M992.500 405L1103.500 414.500M1111.500 354L1222.500 363M1111.500 356L1222.500 365"/>
                        <path d="M1046.500 408L1161.500 360.500M1052.500 409L1167.500 361"/>
                    </g>
                    <g class="white">
                        <path d="M866.500 461.500L1002.500 405.500L1087.500 413.500L951.500 468.500ZM866.500 467L1002.500 411.500M1087.500 419.500L951.500 474.500"/>
                        <path d="M866.500 461.500V467L906.500 475.500M951.500 468.500V474.500L911.500 476M1002.500 405.500V411.500L1043.500 420.500M1087.500 413.500V419.500L1047.500 420.500"/>
                        <path d="M906.500 475.500L1043.500 420.500M911.500 476L1047.500 421M906.500 475V713.500M911.500 475V714M1043.500 420V658.500M1047.500 420V658.500"/>
                        <path d="M906.500 713.500L1043.500 658.500M911.500 714L1047.500 658.500M866.500 715.500L1002.500 660.500M866.500 721L1002.500 665.500M951.500 722.500L1087.500 667.500M951.500 728.500L1087.500 672.500"/>
                        <path d="M906.500 713.500L866.500 715.500V721L951.500 728.500V722.500L911.500 714M1043.500 658.500L1002.500 660.500V665.500L1087.500 672.500V667.500L1047.500 658.500"/>
                    </g>
                </svg>
                <div class="view-win">
                    <button aria-label="最小化视图"><svg><use href="#minimize"/></svg></button>
                    <button aria-label="还原视图"><svg><use href="#restore"/></svg></button>
                    <button aria-label="关闭视图"><svg><use href="#close"/></svg></button>
                </div>
                <svg class="cube" viewBox="0 0 140 84">
                    <ellipse cx="67" cy="58" rx="59" ry="16" fill="none" stroke="#555" stroke-width="9"/>
                    <path d="M35 9l23-4 41 2-19 4z" fill="#747474"/>
                    <path d="M35 9l45 2v53l-45-6z" fill="#696969"/>
                    <path d="M80 11l19-4v43L80 64z" fill="#5b5b5b"/>
                    <path d="M57 25l-11 16M47 31l17 3M53 34v16M62 35v16M53 40l9 2M86 26v24M86 28l8-3v20M90 30v12" fill="none" stroke="#555"/>
                    <path d="M8 48l18-2M11 45l12 5M28 73l18 1M31 76l12-6M34 70l4 7M116 62l18 1M120 59l11 6" stroke="#aaa"/>
                </svg>
                <div class="navbar">
                    <svg viewBox="0 0 32 114">
                        <path d="M24 3l4 4M28 3l-4 4" stroke="#ccc"/>
                        <path d="M16 20h10v10a10 10 0 1 1-10-10z" fill="#9b9b9b"/>
                        <circle cx="16" cy="30" r="6" fill="none" stroke="#444"/><path d="M10 36l3-2M22 36l-3-2" stroke="#444"/>
                        <path d="M8 56h16" stroke="#484848"/>
                        <path d="M8 66h11v5l-4 4H8z" fill="#64784c"/><path d="M16 73h5v5h-5z" fill="#adb9b3"/>
                        <path d="M23 107h6M24 109l2 2 2-2z" stroke="#bbb" fill="#bbb"/>
                    </svg>
                </div>
            </div>
            <div class="vscroll"><svg class="up"><use href="#chev-bold"/></svg><i></i><svg><use href="#chev-bold"/></svg></div>
            <div class="viewbar">
                <button class="ratio">1 : 100</button>
                <button aria-label="详细程度"><svg><use href="#v-detail"/></svg></button>
                <button aria-label="视觉样式"><svg><use href="#v-style"/></svg></button>
                <button aria-label="日光路径"><svg><use href="#v-sun"/></svg></button>
                <button aria-label="阴影"><svg><use href="#v-shadow"/></svg></button>
                <button aria-label="渲染"><svg><use href="#v-render"/></svg></button>
                <button aria-label="裁剪视图"><svg><use href="#v-crop"/></svg></button>
                <button aria-label="显示裁剪区域"><svg><use href="#v-cropvis"/></svg></button>
                <button aria-label="锁定三维视图"><svg><use href="#v-lock"/></svg></button>
                <button aria-label="临时隐藏/隔离"><svg><use href="#v-glasses"/></svg></button>
                <button aria-label="显示隐藏图元"><svg><use href="#v-bulb"/></svg></button>
                <button aria-label="临时视图属性"><svg><use href="#v-temp"/></svg></button>
                <button aria-label="分析模型"><svg><use href="#v-analysis"/></svg></button>
                <button aria-label="位移集"><svg><use href="#v-disp"/></svg></button>
                <button aria-label="显示约束"><svg><use href="#v-constr"/></svg></button>
                <div class="hscroll"><svg class="left"><use href="#chev-bold"/></svg><i></i><svg class="right"><use href="#chev-bold"/></svg></div>
            </div>
        </section>

        <aside class="dock browser">
            <div class="dock-title"><h2>项目浏览器 - 项目1</h2><button aria-label="关闭项目浏览器"><svg><use href="#close"/></svg></button></div>
            <div class="dock-body tree-box">
                <ul class="tree">
                    <li class="root"><b class="minus"></b><svg><use href="#t-fam"/></svg><span>族</span></li>
                    <li><b></b><span>分割轮廓</span></li>
                    <li><b></b><span>场地</span></li>
                    <li><b></b><span>坡道</span></li>
                    <li><b></b><span>填充图案</span></li>
                    <li><b></b><span>墙</span></li>
                    <li><b></b><span>天花板</span></li>
                    <li><b></b><span>屋顶</span></li>
                    <li><b></b><span>幕墙嵌板</span></li>
                    <li><b></b><span>幕墙竖梃</span></li>
                    <li><b></b><span>幕墙系统</span></li>
                    <li><b></b><span>栏杆扶手</span></li>
                    <li><b></b><span>楼板</span></li>
                    <li><b></b><span>楼梯</span></li>
                    <li><b></b><span>注释符号</span></li>
                    <li><b></b><span>电缆桥架</span></li>
                    <li><b></b><span>窗</span></li>
                    <li><b></b><span>管道</span></li>
                    <li><b></b><span>管道系统</span></li>
                    <li><b></b><span>线管</span></li>
                    <li><b></b><span>结构基础</span></li>
                    <li><b></b><span>结构柱</span></li>
                    <li><b></b><span>结构桁架</span></li>
                    <li><b></b><span>结构框架</span></li>
                    <li><b></b><span>结构梁系统</span></li>
                    <li><b></b><span>结构荷载</span></li>
                    <li><b></b><span>结构连接</span></li>
                    <li><b></b><span>结构钢筋</span></li>
                    <li><b></b><span class="sel">结构钢筋接头</span></li>
                    <li><b></b><span>结构钢筋网</span></li>
                    <li><b></b><span>结构钢筋网区域</span></li>
                    <li><b></b><span>详图项目</span></li>
                    <li><b></b><span>轮廓</span></li>
                    <li><b></b><span>软管</span></li>
                    <li><b></b><span>软风管</span></li>
                    <li><b></b><span>边界条件</span></li>
                    <li><b></b><span>门</span></li>
                    <li><b></b><span>风管</span></li>
                    <li><b></b><span>风管系统</span></li>
                    <li class="root"><b></b><svg><use href="#t-grp"/></svg><span>组</span></li>
                    <li class="root"><b class="none"></b><svg><use href="#t-link"/></svg><span>Revit 链接</span></li>
                </ul>
                <div class="vscroll tree-scroll"><svg class="up"><use href="#chev-bold"/></svg><i></i><svg><use href="#chev-bold"/></svg></div>
            </div>
            <div class="meter"></div>
        </aside>
    </main>

    <footer class="status">
        <p>单击可进行选择; 按 Tab 键并单击可选择其他项目; 按 Ctrl 键并单击可将新项目添加到选择集; 按 Shift 键并单击可取消选择。</p>
        <div class="status-mid">
            <svg><use href="#s-people"/></svg>
            <div class="select"><select aria-label="工作集"><option></option></select><svg><use href="#chev-down"/></svg></div>
            <span class="count"><svg><use href="#s-edit"/></svg>:0</span>
            <svg class="opt"><use href="#s-opt"/></svg>
            <svg><use href="#s-opt2"/></svg>
            <div class="select"><select aria-label="设计选项"><option>主模型</option></select><svg><use href="#chev-down"/></svg></div>
        </div>
        <div class="status-right">
            <button aria-label="选择链接"><svg><use href="#s-link"/></svg></button>
            <button aria-label="选择基线图元"><svg><use href="#s-under"/></svg></button>
            <button aria-label="选择锁定图元"><svg><use href="#s-pin"/></svg></button>
            <button aria-label="按面选择图元"><svg><use href="#s-face"/></svg></button>
            <button aria-label="选择时拖曳图元"><svg><use href="#s-drag"/></svg></button>
            <button aria-label="后台进程"><svg><use href="#s-gear"/></svg></button>
            <button aria-label="过滤器"><svg><use href="#s-filter"/></svg>:1</button>
        </div>
    </footer>

    <nav class="taskbar">
        <button aria-label="开始"><svg><use href="#w-start"/></svg></button>
        <button aria-label="Cortana"><svg><use href="#w-cortana"/></svg></button>
        <button aria-label="任务视图"><svg><use href="#w-task"/></svg></button>
        <button class="app current" aria-label="Revit"><svg><use href="#w-revit"/></svg></button>
        <button class="app green" aria-label="Camtasia"><svg><use href="#w-cam"/></svg></button>
        <button class="app red" aria-label="Camtasia Recorder"><svg><use href="#w-cam"/></svg></button>
        <div class="tray">
            <button class="people" aria-label="人脉"><svg><use href="#w-people"/></svg></button>
            <button aria-label="USB"><svg><use href="#w-usb"/></svg></button>
            <button aria-label="安全"><svg><use href="#w-leaf"/></svg></button>
            <button class="ime">英</button>
            <button aria-label="监视"><svg><use href="#w-monitor"/></svg></button>
            <button aria-label="防护"><svg><use href="#w-shield"/></svg></button>
            <button aria-label="弹出设备"><svg><use href="#w-eject"/></svg></button>
            <button aria-label="网络"><svg><use href="#w-net"/></svg></button>
            <button aria-label="音量"><svg><use href="#w-sound"/></svg></button>
            <button class="lang">英</button>
            <button class="sogou" aria-label="输入法"><svg><use href="#w-sogou"/></svg></button>
            <button class="note" aria-label="通知"><svg><use href="#w-note"/></svg></button>
        </div>
    </nav>

    <div class="watermark">
        <svg viewBox="0 0 180 180">
            <path d="M22 52C0 70-4 110 20 137C35 152 55 158 77 157C50 148 25 130 15 100C12 80 15 65 22 52" fill="#4fb795"/>
            <path d="M30 47C60 46 80 65 92 80C105 58 130 46 157 47C130 55 112 70 109 90C106 115 95 130 68 148C80 130 86 120 86 105C82 80 65 60 30 47" fill="#b4c77c"/>
            <path d="M166 69C178 95 175 135 135 160C110 175 75 176 50 167C85 164 95 148 101 125C108 95 130 88 166 69" fill="#3aae80"/>
            <circle cx="93" cy="43" r="15" fill="#b4c77c"/>
            <path d="M74 20L96 2l25 10-5 3-1 8-38 8 1-9z" fill="#6c6c6c"/>
            <path d="M113 17l3-1 4 16-4 1z" fill="#f0583c"/>
        </svg>
        <div class="wm-text">
            <strong>云发教育</strong>
            <p><span>用知识</span><span>筑梦想</span><span>造未来</span></p>
        </div>
    </div>
    <svg class="cursor" viewBox="0 0 14 20"><path d="M1 1v15l4-3 3 6 2-1-3-6h5z" fill="#fff" stroke="#222"/></svg>
</body>
</html>
```
FILE: styles.css
```css
:root {
    --chrome: #d3d3d3;
    --green: #e3ebd5;
    --panel: #f5f5f5;
    --dock: #f0f0f0;
    --dock-title: #bfcde1;
    --line: #828282;
    --text: #1c1c1c;
    --select: #b5d3f3;
    --select-line: #2b69ad;
    --taskbar: #03375d;
}

* {
    margin: 0;
    padding: 0;
    box-sizing: border-box;
}

body {
    height: 100vh;
    display: flex;
    flex-direction: column;
    overflow: hidden;
    position: relative;
    background: var(--green);
    color: var(--text);
    font: 12px/16px "Open Sans", "Noto Sans CJK SC", sans-serif;
}

button,
input,
select {
    font: inherit;
    color: inherit;
    border: none;
    background: none;
    border-radius: 0;
}

button svg {
    display: block;
    flex: none;
}

h1,
h2 {
    font-size: 12px;
    font-weight: 400;
}

a {
    color: inherit;
    text-decoration: none;
}

.sprite {
    display: none;
}

svg.caret {
    width: 8px;
    height: 8px;
    flex: none;
}

input[type="checkbox"] {
    appearance: none;
    width: 13px;
    height: 13px;
    border: 1px solid #222;
    background: #fff;
    display: block;
}

input[type="checkbox"]:checked::after {
    content: "";
    display: block;
    width: 4px;
    height: 8px;
    margin: 0 auto;
    border: solid #222;
    border-width: 0 1px 1px 0;
    transform: rotate(40deg);
}

/* title bar */
.titlebar {
    height: 24px;
    flex: none;
    display: flex;
    align-items: center;
    padding-bottom: 2px;
    background: var(--chrome);
}

.quick,
.info {
    display: flex;
    align-items: center;
}

.quick {
    width: 795px;
    padding-left: 1px;
}

.q {
    width: 24px;
    height: 22px;
    display: flex;
    align-items: center;
    justify-content: center;
    flex: none;
}

.q svg,
.login svg {
    width: 18px;
    height: 18px;
}

.q.logo {
    margin-right: 4px;
}

.q.on {
    border: 1px solid var(--select-line);
    background: var(--select);
}

.quick svg.caret {
    margin: 0 2px;
}

svg.caret.dim {
    opacity: .5;
}

.q-sep {
    width: 1px;
    height: 20px;
    margin: 0 3px;
    background: #c2c2c2;
}

.q-gap {
    width: 8px;
}

.letter {
    font: 700 19px/20px "Liberation Sans", sans-serif;
    color: #444;
}

.title {
    flex: 1;
    display: flex;
    gap: 18px;
    font-size: 13px;
    color: #333;
    white-space: pre;
}

.title span + span {
    font-size: 12px;
}

svg.side {
    transform: rotate(-90deg);
    margin-right: 3px;
}

.search {
    width: 180px;
    height: 22px;
    padding: 0 3px;
    border: 1px solid #000;
    background: #fff;
}

.search::placeholder {
    color: #666;
    font-style: italic;
}

.login {
    width: 108px;
    display: flex;
    align-items: center;
    gap: 4px;
    padding-left: 3px;
}

.exchange {
    margin-left: 6px;
}

.help {
    margin-left: 11px;
}

.win {
    display: flex;
    gap: 12px;
    padding: 0 7px 0 24px;
}

.win svg {
    width: 13px;
    height: 13px;
}

/* ribbon tabs */
.tabs {
    height: 24px;
    flex: none;
    display: flex;
    background: var(--chrome);
}

.tabs a {
    padding: 7px 10px 0;
}

.tabs .file {
    padding: 7px 1px 0 2px;
    color: #fff;
}

.tabs .active {
    background: var(--green);
    margin-top: 3px;
    padding-top: 4px;
}

.collapse {
    display: flex;
    align-items: center;
    gap: 3px;
    padding: 6px 0 0 20px;
}

.cap {
    width: 16px;
    height: 10px;
}

/* ribbon panels */
.ribbon {
    height: 96px;
    flex: none;
    display: flex;
    border-bottom: 1px solid #d2d8c8;
}

.panel {
    display: flex;
    flex-direction: column;
    background: var(--panel);
    border-right: 1px solid #ececec;
}

.panel h2 {
    height: 20px;
    line-height: 20px;
    text-align: center;
    color: #333;
}

.tools {
    height: 75px;
    padding-top: 3px;
    display: flex;
    gap: 7px;
}

.p-select { width: 50px; }
.p-props { width: 47px; }
.p-clip { width: 74px; }
.p-geo { width: 172px; }
.p-modify { width: 238px; }
.p-view { width: 64px; }
.p-measure { width: 57px; }
.p-create { width: 83px; }
.p-mode { width: 46px; }
.p-column { width: 122px; }

.p-select .tools { padding-left: 7px; }
.p-props .tools { padding-left: 3px; }
.p-clip .tools { padding-left: 2px; gap: 4px; }
.p-geo .tools { padding-left: 7px; }
.p-modify .tools { padding-left: 6px; }
.p-view .tools { padding-left: 5px; gap: 0; }
.p-measure .tools { padding-left: 5px; }
.p-create .tools { padding-left: 6px; }
.p-column .tools { padding-left: 1px; gap: 0; }

.context h2 {
    background: #dce6cc;
}

.big {
    width: 38px;
    height: 72px;
    display: flex;
    flex-direction: column;
    align-items: center;
    padding-top: 2px;
    line-height: 18px;
    white-space: nowrap;
}

.big > svg:first-child {
    width: 32px;
    height: 32px;
    margin-bottom: 4px;
}

.big.on,
.two-rows .on {
    border: 1px solid var(--select-line);
    background: var(--select);
}

.big.off {
    width: 45px;
    color: #aaa;
}

.p-mode .big {
    width: 45px;
}

.p-column .big {
    width: 60px;
}

.two-rows {
    flex-direction: column;
    gap: 0;
}

.two-rows button {
    width: 38px;
    height: 36px;
    display: flex;
    align-items: center;
    justify-content: center;
}

.two-rows button svg:first-child,
.grid4 svg,
.grid2 svg {
    width: 31px;
    height: 31px;
}

.p-measure .two-rows button {
    width: 46px;
    gap: 6px;
}

.col button {
    width: 18px;
    height: 24px;
    display: flex;
    align-items: center;
}

.col button svg:first-child {
    width: 18px;
    height: 18px;
}

.col.wide {
    width: 96px;
}

.col.wide button {
    width: 96px;
    white-space: nowrap;
    color: #333;
}

.col.wide button svg:first-child {
    margin-right: 4px;
}

.col.wide .caret {
    margin-left: 6px;
}

.col.pair {
    width: 36px;
}

.col.pair .caret {
    margin-left: 4px;
}

.grid4,
.grid2 {
    display: grid;
    grid-template-columns: repeat(4, 32px);
    grid-auto-rows: 36px;
    column-gap: 7px;
}

.grid2 {
    grid-template-columns: repeat(2, 32px);
}

/* options bar */
.options {
    height: 32px;
    flex: none;
    display: flex;
    align-items: center;
    padding: 0 9px 3px;
    background: var(--green);
}

.mode {
    width: 92px;
    border-right: 1px solid #c0c7b4;
}

.options label {
    display: flex;
    align-items: center;
    gap: 3px;
    margin-left: 9px;
}

/* work area */
.work {
    flex: 1;
    min-height: 0;
    display: grid;
    grid-template-columns: 288px minmax(0, 1fr) 287px;
    grid-template-rows: minmax(0, 1fr);
    background: var(--dock);
}

.dock {
    display: flex;
    flex-direction: column;
    min-height: 0;
    position: relative;
    padding-bottom: 1px;
}

.dock-title {
    height: 18px;
    flex: none;
    display: flex;
    align-items: center;
    justify-content: space-between;
    padding: 0 4px;
    background: var(--dock-title);
}

.dock-title h2 {
    font-size: 13px;
}

.dock-title svg {
    width: 12px;
    height: 12px;
}

.dock-body {
    flex: 1;
    min-height: 0;
    margin: 3px 2px 0 0;
    display: flex;
    flex-direction: column;
    border: 1px solid var(--line);
    border-width: 1px 0 0 2px;
}

.type {
    height: 72px;
    flex: none;
    display: flex;
    align-items: center;
    gap: 5px;
    padding: 0 2px 0 3px;
    border: 1px solid #d5d5d5;
    border-left: none;
    text-align: left;
    line-height: 15px;
    color: #333;
}

.type span {
    flex: 1;
}

.thumb {
    width: 66px;
    height: 66px;
    background: #fff;
    border: 1px solid #ddd;
}

.filter {
    height: 27px;
    flex: none;
    display: flex;
    gap: 5px;
    padding: 1px 0;
}

.select {
    position: relative;
    width: 200px;
}

.select select {
    appearance: none;
    width: 100%;
    height: 100%;
    padding: 0 4px;
}

.select svg {
    position: absolute;
    right: 4px;
    top: calc(50% - 5px);
    width: 10px;
    height: 10px;
    pointer-events: none;
}

.filter .select select {
    background: #e3e3e3;
    border: 1px solid #b4b4b4;
}

.edit-type {
    display: flex;
    align-items: center;
    gap: 4px;
    padding-bottom: 2px;
}

.edit-type svg {
    width: 18px;
    height: 18px;
}

.sheet {
    flex: 1;
    min-height: 0;
    background: #fff;
    overflow: hidden;
}

.props {
    width: 100%;
    table-layout: fixed;
    border-spacing: 0;
}

.c-name {
    width: 136px;
}

.c-btn {
    width: 13px;
}

.props td {
    height: 20px;
    border: 1px dotted #777;
    border-width: 0 1px 1px 0;
}

.props td:first-child {
    padding-left: 10px;
}

.props label,
.props input[type="text"] {
    display: block;
    width: 100%;
    height: 19px;
    line-height: 18px;
}

.props input[type="text"] {
    padding: 0 2px 2px;
}

.props input[type="checkbox"] {
    margin-left: 3px;
}

.props .cur input[type="text"] {
    border: 1px solid #000;
    padding: 0 1px 2px;
}

.props td button {
    display: block;
    width: 10px;
    height: 18px;
    margin-left: 1px;
    background: #ddd;
    border: 1px solid #aaa;
}

.props .ro {
    color: #888;
}

.group th {
    height: 20px;
    padding-left: 2px;
    background: #dcdcdc;
    font-weight: 400;
    text-align: left;
}

.group svg {
    float: right;
    width: 8px;
    height: 10px;
    margin: 2px 6px 0 0;
}

.dock-foot {
    height: 25px;
    flex: none;
    display: flex;
    align-items: center;
    justify-content: space-between;
    padding: 0 2px;
}

.dock-foot a {
    color: #0b5fb0;
    text-decoration: underline;
}

.dock-foot button {
    width: 73px;
    height: 19px;
    background: #ccc;
    color: #888;
}

/* 3d view */
.view {
    display: grid;
    grid-template-columns: minmax(0, 1fr) 18px;
    grid-template-rows: minmax(0, 1fr) 19px;
    margin: 0 6px 0 2px;
    border: 2px solid var(--line);
    border-width: 2px 0 0 2px;
}

.canvas {
    position: relative;
    background: #000;
    overflow: hidden;
}

.model {
    display: block;
    width: 100%;
    height: 100%;
    fill: none;
    shape-rendering: crispEdges;
}

.blue {
    stroke: #1f3cb4;
}

.white {
    stroke: #fff;
}

.view-win {
    position: absolute;
    top: 8px;
    right: 3px;
    display: flex;
    gap: 6px;
    color: #eee;
}

.view-win svg {
    width: 12px;
    height: 12px;
}

.cube {
    position: absolute;
    top: 86px;
    right: 17px;
    width: 140px;
    height: 84px;
}

.navbar {
    position: absolute;
    top: 201px;
    right: 2px;
    width: 32px;
    height: 114px;
    border-radius: 4px;
    background: #555;
}

.vscroll {
    display: flex;
    flex-direction: column;
    align-items: center;
    justify-content: space-between;
    padding: 4px 1px 3px;
    background: #eee;
}

.vscroll svg,
.hscroll svg {
    width: 10px;
    height: 10px;
}

.vscroll .up {
    transform: rotate(180deg);
}

.vscroll i {
    width: 16px;
    height: 16px;
    background: #cdcdcd;
}

.viewbar {
    grid-column: 1 / -1;
    display: flex;
    align-items: center;
    background: var(--dock);
    border-bottom: 1px solid #aaa;
}

.viewbar button {
    width: 21px;
    display: flex;
    justify-content: center;
}

.viewbar button svg {
    width: 17px;
    height: 17px;
}

.viewbar .ratio {
    width: 76px;
    padding-left: 6px;
    white-space: pre;
}

.hscroll {
    flex: 1;
    display: flex;
    align-items: center;
    justify-content: space-between;
    padding: 0 20px 0 4px;
}

.hscroll .left {
    transform: rotate(90deg);
}

.hscroll .right {
    transform: rotate(-90deg);
}

.hscroll i {
    width: 17px;
    height: 17px;
    background: #cdcdcd;
}

/* project browser */
.tree-box {
    flex-direction: row;
    margin-right: 0;
    background: #fff;
}

.tree {
    flex: 1;
    list-style: none;
    padding-left: 8px;
    overflow: hidden;
}

.tree li {
    height: 20px;
    display: flex;
    align-items: center;
    padding-left: 15px;
    border-left: 1px dotted #999;
}

.tree b {
    width: 9px;
    height: 9px;
    flex: none;
    border: 1px solid #8c8c8c;
    background:
        linear-gradient(#345, #345) center / 5px 1px no-repeat,
        linear-gradient(#345, #345) center / 1px 5px no-repeat,
        #fff;
}

.tree .minus {
    background: linear-gradient(#345, #345) center / 5px 1px no-repeat, #fff;
}

.tree .none {
    border: none;
    background: none;
}

.tree b::after {
    content: "";
    display: block;
    width: 10px;
    margin: 3px 0 0 9px;
    border-top: 1px dotted #999;
}

.tree span {
    margin-left: 11px;
    padding: 0 2px;
    line-height: 18px;
}

.tree .root {
    padding-left: 0;
    margin-left: -4px;
    border-left-color: transparent;
}

.tree .root b::after {
    width: 5px;
}

.tree .root svg {
    width: 15px;
    height: 14px;
    margin-left: 7px;
}

.tree .root span {
    margin-left: 5px;
}

.tree .sel {
    background: #e6e6e6;
}

.tree-scroll {
    width: 16px;
    margin-right: 1px;
    padding-bottom: 4px;
}

.tree-scroll i {
    height: 658px;
    margin-top: 104px;
}

.meter {
    position: absolute;
    top: 184px;
    right: 0;
    width: 10px;
    height: 58px;
    border-radius: 4px 0 0 4px;
    border: solid #444a58;
    border-width: 7px 2px 7px 4px;
    background: repeating-linear-gradient(#6c7280 0 1px, #444a58 1px 3px);
}

.meter::after {
    content: "";
    display: block;
    height: 8px;
    margin-top: 36px;
    background: repeating-linear-gradient(#5fe0c0 0 1px, #444a58 1px 3px);
}

/* status bar */
.status {
    height: 24px;
    flex: none;
    display: flex;
    align-items: center;
    background: var(--chrome);
    border-top: 1px solid #999;
}

.status p {
    width: 950px;
    padding-left: 2px;
    white-space: nowrap;
}

.status svg {
    width: 16px;
    height: 16px;
    flex: none;
}

.status-mid {
    display: flex;
    align-items: center;
    gap: 9px;
    flex: 1;
}

.status .select {
    width: 204px;
    height: 18px;
}

.status .select select {
    background: #fff;
    color: #666;
}

.status .select svg {
    width: 10px;
    height: 10px;
}

.count {
    display: flex;
    align-items: center;
    gap: 4px;
    width: 44px;
}

.status-right {
    display: flex;
    gap: 8px;
    padding-right: 64px;
}

.status-right button {
    display: flex;
    align-items: center;
    min-width: 18px;
}

/* taskbar */
.taskbar {
    height: 40px;
    flex: none;
    display: flex;
    background: var(--taskbar);
    color: #fff;
}

.taskbar > button {
    width: 48px;
    display: flex;
    align-items: center;
    justify-content: center;
}

.taskbar svg {
    width: 18px;
    height: 18px;
}

.taskbar .app svg {
    width: 24px;
    height: 28px;
}

.taskbar .app {
    border: solid transparent;
    border-width: 3px 0;
}

.taskbar .current {
    margin-left: 3px;
    background: #0752a3;
    border-top-color: #0752a3;
    border-bottom-color: #86c2f5;
}

.taskbar .green,
.taskbar .red {
    width: 40px;
    margin-left: 5px;
    border-bottom-color: #86bce8;
}

.taskbar .green {
    color: #4b9014;
}

.taskbar .red {
    margin-left: 9px;
    color: #f0643c;
}

.tray {
    margin-left: auto;
    margin-right: 3px;
    padding-right: 17px;
    display: flex;
    align-items: center;
    border-right: 1px solid #4d7391;
}

.tray button {
    width: 24px;
    height: 40px;
    display: flex;
    align-items: center;
    justify-content: center;
}

.tray .people {
    margin-right: 12px;
}

.tray .ime {
    width: 16px;
    height: 18px;
    margin: 0 4px;
    background: #f08a2c;
}

.tray .lang {
    font-size: 14px;
}

.tray .sogou {
    margin: 0 15px 0 4px;
}

/* school watermark over the window */
.watermark {
    position: absolute;
    left: 30px;
    top: 20px;
    display: flex;
    pointer-events: none;
    mix-blend-mode: multiply;
}

.watermark svg {
    width: 180px;
    height: 180px;
    opacity: .8;
}

.wm-text {
    margin-left: 2px;
    color: #000;
    opacity: .53;
}

.wm-text strong {
    display: block;
    margin-top: 20px;
    font: 700 85px/87px "Noto Sans CJK SC", sans-serif;
}

.wm-text p {
    display: flex;
    gap: 22px;
    font: 500 34px/54px "Noto Sans CJK SC", sans-serif;
}

.cursor {
    position: absolute;
    left: 149px;
    top: 88px;
    width: 14px;
    height: 20px;
}
```
